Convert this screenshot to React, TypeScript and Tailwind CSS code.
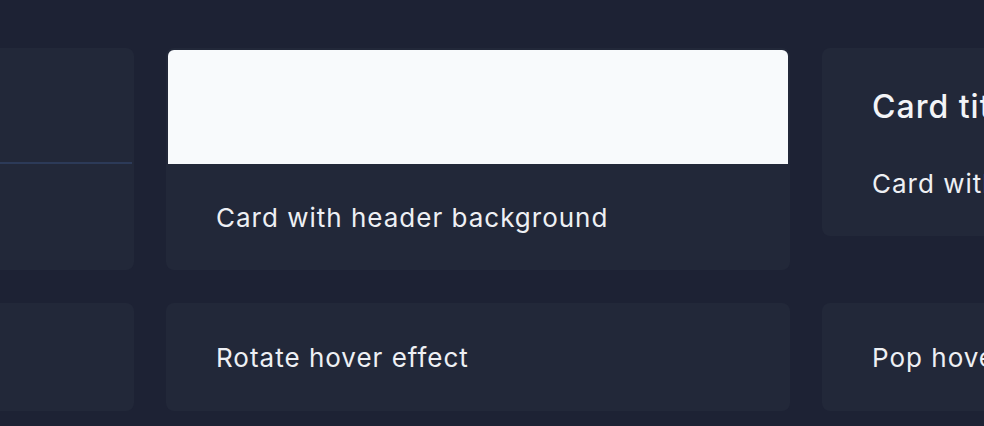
const cardBase = "w-[624px] shrink-0 rounded-lg bg-[#222839] overflow-hidden";
const bodyText = "px-[50px] text-[26px] leading-[40px] tracking-[1px] text-[#eef0f4]";

function DividerCard() {
  return (
    <div className={cardBase}>
      <div className="h-[114px]" />
      <div className="mx-[2px] h-[2px] bg-[#2c3a58]" />
      <div className="h-[106px]" />
    </div>
  );
}

function HeaderBgCard() {
  return (
    <div className={cardBase}>
      <div className="mx-[2px] mt-[2px] h-[114px] rounded-t-md bg-[#f8fafc]" />
      <p className={`${bodyText} pt-[34px] pb-[32px]`}>Card with header background</p>
    </div>
  );
}

function TitleCard() {
  return (
    <div className={cardBase}>
      <div className="px-[50px] pt-[35px] pb-[32px]">
        <h2 className="text-[32px] leading-[48px] font-medium tracking-[1px] text-[#f3f4f7]">
          Card title
        </h2>
        <p className="mt-[33px] text-[26px] leading-[40px] tracking-[1px] text-[#eef0f4]">
          Card with a title and text
        </p>
      </div>
    </div>
  );
}

function HoverCard({ label }: { label: string }) {
  return (
    <div className={cardBase}>
      <p className={`${bodyText} pt-[35px] pb-[33px]`}>{label}</p>
    </div>
  );
}

export default function App() {
  return (
    <div
      className="h-[426px] w-full overflow-hidden bg-[#1d2234]"
      style={{ fontFamily: "Inter, 'Noto Sans', sans-serif" }}
    >
      <div className="ml-[-490px] flex flex-col gap-[33px] pt-12">
        <div className="flex items-start gap-8">
          <DividerCard />
          <HeaderBgCard />
          <TitleCard />
        </div>
        <div className="flex items-start gap-8">
          <HoverCard label="Scale hover effect" />
          <HoverCard label="Rotate hover effect" />
          <HoverCard label="Pop hover effect" />
        </div>
      </div>
    </div>
  );
}
